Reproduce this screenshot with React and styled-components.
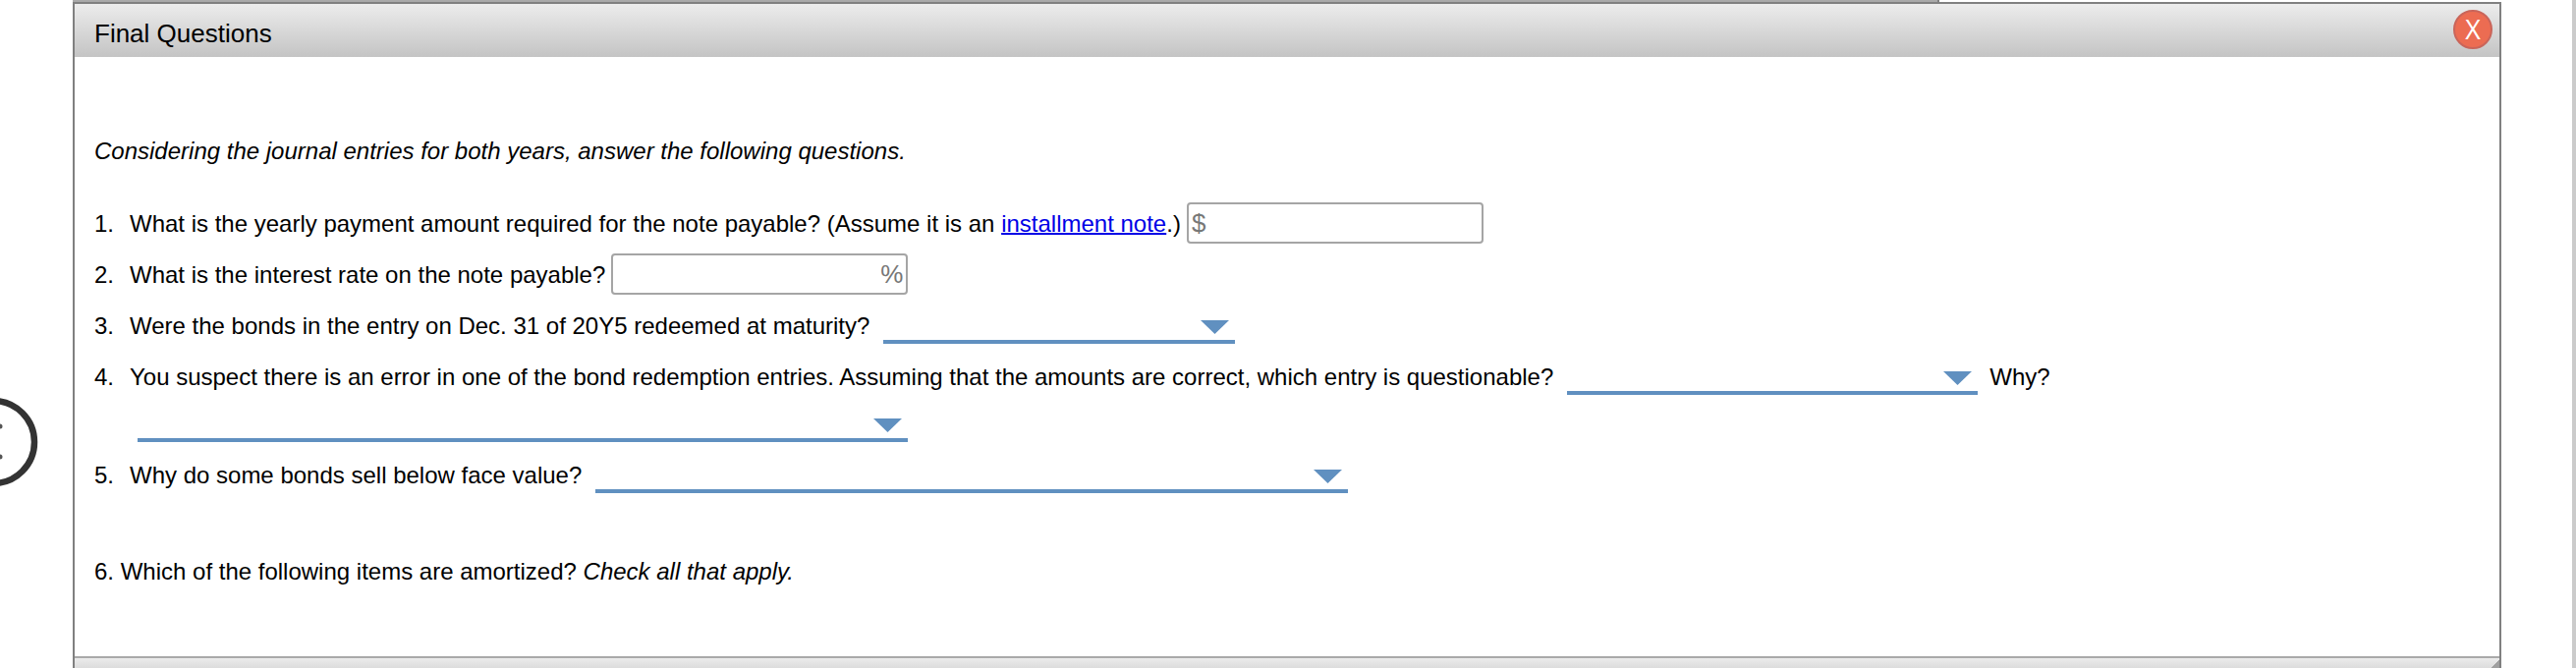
import React from 'react';
import styled, { createGlobalStyle } from 'styled-components';

const GlobalStyle = createGlobalStyle`
  html, body {
    margin: 0;
    padding: 0;
    background: #fff;
    overflow: hidden;
  }
`;

const Page = styled.div`
  position: relative;
  width: 2622px;
  height: 680px;
  overflow: hidden;
  padding-left: 74px;
  box-sizing: border-box;
  background: #fff;
  font-family: "Liberation Sans", Arial, sans-serif;
  color: #000;
`;

const TopEdge = styled.div`
  width: 1900px;
  height: 2px;
  background: #a9a9a9;
  border-right: 2px solid #808080;
  box-sizing: border-box;
`;

const Panel = styled.section`
  width: 2472px;
  height: 678px;
  box-sizing: border-box;
  border: 2px solid #808080;
  border-bottom: none;
  display: flex;
  flex-direction: column;
`;

const Header = styled.header`
  height: 54px;
  flex-shrink: 0;
  display: flex;
  align-items: center;
  justify-content: space-between;
  padding: 0 7px 0 20px;
  background: linear-gradient(#ececec, #c4c4c4);
`;

const Title = styled.h2`
  margin: 7px 0 0;
  font-size: 26px;
  font-weight: 400;
`;

const CloseButton = styled.button`
  width: 40px;
  height: 40px;
  padding: 0;
  margin-top: -2px;
  border-radius: 50%;
  border: 2px solid #c9655a;
  background: #ec6c52;
  color: #fff;
  font-family: "Open Sans", sans-serif;
  font-size: 27px;
  line-height: 34px;
`;

const Body = styled.div`
  flex: 1;
  padding: 70px 20px 0 20px;
  font-size: 24px;
  line-height: 52px;
`;

const Intro = styled.p`
  margin: 0 0 21px;
  font-style: italic;
`;

const Row = styled.div`
  display: flex;
  align-items: center;
  box-sizing: border-box;
  height: ${(p) => p.$height || 52}px;
  padding: 2px 0 0 ${(p) => p.$indent || 0}px;
  white-space: pre;
`;

const Num = styled.span`
  width: 36px;
  flex-shrink: 0;
`;

const Link = styled.a`
  color: #0000e6;
  text-decoration: underline;
  text-decoration-thickness: 2px;
`;

const Field = styled.span`
  display: flex;
  align-items: center;
  justify-content: ${(p) => (p.$end ? 'flex-end' : 'flex-start')};
  width: ${(p) => p.$width}px;
  height: 42px;
  box-sizing: border-box;
  margin: -2px 0 0 6px;
  padding: 0 3px;
  border: 2px solid #a5a5a5;
  border-radius: 4px;
  color: #777;
  font-size: 26px;
`;

const Dropdown = styled.span`
  display: flex;
  align-items: flex-start;
  justify-content: flex-end;
  width: ${(p) => p.$width}px;
  height: 24px;
  margin: ${(p) => p.$top ?? 12}px ${(p) => p.$right || 0}px 0 ${(p) => p.$left || 0}px;
  box-sizing: border-box;
  padding-right: 6px;
  border-bottom: 4px solid #6090c0;
`;

const Arrow = styled.svg`
  width: 29px;
  height: 14px;
  fill: #6090c0;
  display: block;
`;

const Caret = () => (
  <Arrow viewBox="0 0 29 14">
    <polygon points="0,0 29,0 14.5,14" />
  </Arrow>
);

const Select = (props) => (
  <Dropdown {...props}>
    <Caret />
  </Dropdown>
);

const LastQuestion = styled.p`
  margin: 47px 0 0;
`;

const Footer = styled.div`
  position: relative;
  height: 10px;
  flex-shrink: 0;
  border-top: 2px solid #a9a9a9;
  background: linear-gradient(#ececec, #dcdcdc);
`;

const Grip = styled.span`
  position: absolute;
  right: 0;
  bottom: 0;
  width: 8px;
  height: 8px;
  background: linear-gradient(135deg, transparent 50%, #a0a0a0 50%);
`;

const ScrollEdge = styled.div`
  position: absolute;
  top: 0;
  right: 0;
  width: 4px;
  height: 100%;
  background: #cbcbcb;
`;

const CircleMark = styled.svg`
  position: absolute;
  left: 0;
  top: 400px;
  width: 42px;
  height: 100px;
`;

export default function App() {
  return (
    <Page>
      <GlobalStyle />
      <TopEdge />
      <Panel>
        <Header>
          <Title>Final Questions</Title>
          <CloseButton>X</CloseButton>
        </Header>
        <Body>
          <Intro>Considering the journal entries for both years, answer the following questions.</Intro>
          <Row>
            <Num>1.</Num>What is the yearly payment amount required for the note payable? (Assume it is an{' '}
            <Link href="#">installment note</Link>.)
            <Field $width={302}>$</Field>
          </Row>
          <Row>
            <Num>2.</Num>What is the interest rate on the note payable?
            <Field $width={302} $end>%</Field>
          </Row>
          <Row>
            <Num>3.</Num>Were the bonds in the entry on Dec. 31 of 20Y5 redeemed at maturity?
            <Select $width={358} $left={14} />
          </Row>
          <Row>
            <Num>4.</Num>You suspect there is an error in one of the bond redemption entries. Assuming that the amounts are correct, which entry is questionable?
            <Select $width={418} $left={14} $right={12} />
            Why?
          </Row>
          <Row $indent={44} $height={48}>
            <Select $width={784} $top={8} />
          </Row>
          <Row>
            <Num>5.</Num>Why do some bonds sell below face value?
            <Select $width={766} $left={14} />
          </Row>
          <LastQuestion>
            6. Which of the following items are amortized? <em>Check all that apply.</em>
          </LastQuestion>
        </Body>
        <Footer>
          <Grip />
        </Footer>
      </Panel>
      <ScrollEdge />
      <CircleMark viewBox="0 0 42 100">
        <circle cx="-7" cy="50" r="42" fill="none" stroke="#333" strokeWidth="6.5" />
        <circle cx="0" cy="34" r="2.5" fill="#555" />
        <circle cx="0" cy="65" r="2.5" fill="#555" />
      </CircleMark>
    </Page>
  );
}
